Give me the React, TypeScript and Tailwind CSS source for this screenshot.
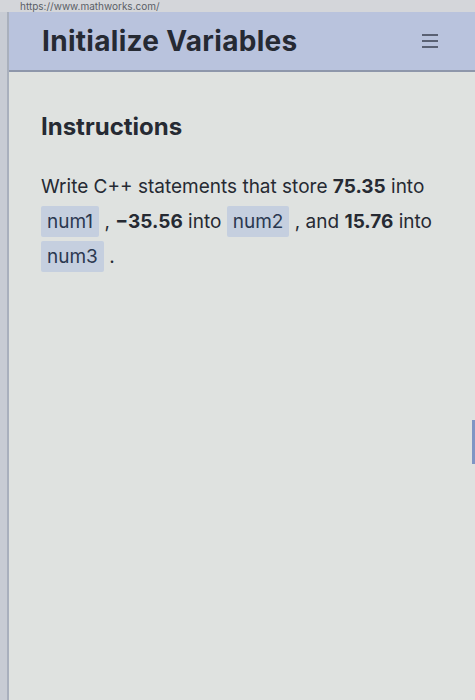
import React from 'react';

const Chip = ({ children }: { children: React.ReactNode }) => (
  <span className="inline-block rounded-[2px] bg-[#c5cfdf] px-[6px] leading-[31px] text-[#2b3850]">
    {children}
  </span>
);

export default function App() {
  return (
    <div className="flex h-[700px] w-[475px] flex-col overflow-hidden bg-[#dde0df] font-['Inter','Noto_Sans',sans-serif] text-[#262a33]">
      {/* browser address bar, mostly scrolled off */}
      <div className="h-[12px] overflow-hidden bg-[#d4d6da]">
        <div className="pl-[20px] text-[10px] leading-[12px] text-[#5a5e66]">https://www.mathworks.com/</div>
      </div>

      <div className="flex flex-1">
        {/* left gutter */}
        <div className="w-[9px] border-r-2 border-[#a9b0bd] bg-[#c8ccd4]" />

        <div className="flex flex-1 flex-col">
          <header className="flex h-[60px] items-center justify-between border-b-2 border-[#8e97ab] bg-[#b9c3dd] pl-[33px] pr-[36px]">
            <h1 className="text-[28px] font-bold tracking-[0.3px]">Initialize Variables</h1>
            <svg width="18" height="16" viewBox="0 0 18 16" className="text-[#3b4150]">
              <path d="M1 2h16M1 8h16M1 14h16" stroke="currentColor" strokeWidth="1.6" />
            </svg>
          </header>

          <main className="relative flex-1 bg-[#dfe2e0] pl-[32px] pr-[24px] pt-[37px]">
            <h2 className="text-[24px] font-bold">Instructions</h2>
            <p className="mt-[24px] text-[19px] leading-[35px]">
              Write C++ statements that store <b>75.35</b> into <Chip>num1</Chip> , <b>−35.56</b> into{' '}
              <Chip>num2</Chip> , and <b>15.76</b> into <Chip>num3</Chip> .
            </p>
            <div className="absolute right-0 top-[348px] h-[44px] w-[3px] bg-[#7f95c4]" />
          </main>
        </div>
      </div>
    </div>
  );
}
